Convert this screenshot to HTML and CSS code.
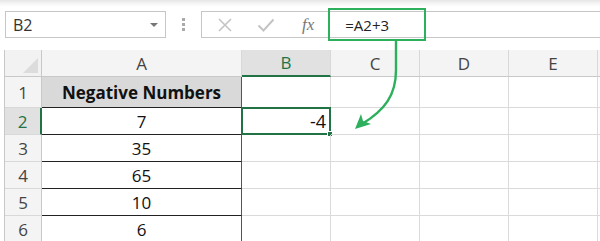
FILE: index.html
```html
<!DOCTYPE html>
<html>
<head>
<meta charset="utf-8">
<link rel="stylesheet" href="styles.css">
</head>
<body>
<div class="page">
  <div class="topbar">
    <div class="namebox"><span class="name">B2</span><span class="caret"></span></div>
    <div class="dots"><i></i><i></i><i></i></div>
    <div class="fbar">
      <svg class="ic ic-x" width="16" height="16" viewBox="0 0 16 16"><path d="M2 2L14 14M14 2L2 14" stroke="#c4c4c4" stroke-width="1.6" fill="none"/></svg>
      <svg class="ic ic-ok" width="18" height="16" viewBox="0 0 18 16"><path d="M1.5 8.5L6.5 13.5L16.5 2.5" stroke="#c4c4c4" stroke-width="2" fill="none"/></svg>
      <span class="fx">fx</span>
      <div class="formula">=A2+3</div>
    </div>
  </div>
  <div class="sheet">
    <div class="corner"><span class="tri"></span></div>
    <div class="ch">A</div>
    <div class="ch sel">B</div>
    <div class="ch">C</div>
    <div class="ch">D</div>
    <div class="ch">E</div>
    <div class="ch last"></div>

    <div class="rh r1">1</div>
    <div class="c a head r1">Negative Numbers</div>
    <div class="c r1 bcol"></div><div class="c r1"></div><div class="c r1"></div><div class="c r1"></div><div class="c r1 last"></div>

    <div class="rh sel">2</div>
    <div class="c a">7</div>
    <div class="c bcol active">-4<span class="handle"></span></div><div class="c"></div><div class="c"></div><div class="c"></div><div class="c last"></div>

    <div class="rh">3</div>
    <div class="c a">35</div>
    <div class="c bcol"></div><div class="c"></div><div class="c"></div><div class="c"></div><div class="c last"></div>

    <div class="rh">4</div>
    <div class="c a">65</div>
    <div class="c bcol"></div><div class="c"></div><div class="c"></div><div class="c"></div><div class="c last"></div>

    <div class="rh">5</div>
    <div class="c a">10</div>
    <div class="c bcol"></div><div class="c"></div><div class="c"></div><div class="c"></div><div class="c last"></div>

    <div class="rh">6</div>
    <div class="c a">6</div>
    <div class="c bcol"></div><div class="c"></div><div class="c"></div><div class="c"></div><div class="c last"></div>
  </div>
  <svg class="arrow" width="600" height="241" viewBox="0 0 600 241">
    <path d="M396 40 L396 70 C396 95 385 110 362 124" stroke="#2cb05c" stroke-width="2.4" fill="none"/>
    <path d="M355 129 L361 114 L363 121 L371 124 Z" fill="#2cb05c"/>
  </svg>
</div>
</body>
</html>
```
FILE: styles.css
```css
* { box-sizing: border-box; }
html, body { margin: 0; padding: 0; background: #fff; }
body { font-family: "Open Sans", sans-serif; }
.page { position: relative; width: 600px; height: 241px; overflow: hidden; }

.topbar {
  height: 50px;
  display: flex;
  align-items: flex-start;
  padding-top: 11px;
  background: linear-gradient(#e6e6e6 0px, #f7f7f7 4px, #ffffff 7px);
}
.namebox {
  margin-left: 5px;
  width: 161px;
  height: 27px;
  border: 1px solid #c6c6c6;
  display: flex;
  align-items: center;
  justify-content: space-between;
  padding: 0 7px 0 7px;
  background: #fff;
}
.name { font-size: 16px; color: #333; }
.caret {
  width: 0; height: 0;
  border-left: 4px solid transparent;
  border-right: 4px solid transparent;
  border-top: 4px solid #777;
}
.dots {
  width: 35px;
  height: 27px;
  display: flex;
  flex-direction: column;
  align-items: center;
  justify-content: center;
  gap: 2px;
}
.dots i { display: block; width: 3px; height: 3px; background: #aaa; }
.fbar {
  flex: 1;
  height: 27px;
  border: 1px solid #c6c6c6;
  border-right: none;
  display: flex;
  align-items: center;
  background: #fff;
}
.ic { display: block; }
.ic-x { margin-left: 15px; }
.ic-ok { margin-left: 24px; }
.fx {
  margin-left: 27px;
  font-family: "Liberation Serif", serif;
  font-style: italic;
  font-size: 17px;
  color: #777;
}
.formula {
  margin-left: 14px;
  margin-top: -4px;
  margin-bottom: -4px;
  height: 33px;
  width: 98px;
  border: 2px solid #2cb05c;
  font-size: 15px;
  color: #222;
  display: flex;
  align-items: center;
  padding-left: 15px;
}

.sheet {
  margin-left: 4px;
  border-left: 1px solid #c8c8c8;
  display: grid;
  grid-template-columns: 37px 200px 89px 89px 89px 89px 1fr;
  grid-template-rows: 27px 31px 27px 27px 27px 27px 27px;
}
.corner {
  background: #f2f2f2;
  border-right: 1px solid #c8c8c8;
  border-bottom: 1px solid #c8c8c8;
  position: relative;
}
.tri {
  position: absolute;
  right: 3px;
  bottom: 3px;
  width: 0; height: 0;
  border-left: 15px solid transparent;
  border-bottom: 15px solid #dcdcdc;
}
.ch {
  background: #f4f4f4;
  border-right: 1px solid #d8d8d8;
  border-bottom: 1px solid #c8c8c8;
  display: flex;
  align-items: center;
  justify-content: center;
  font-size: 17px;
  color: #444;
}
.ch.sel {
  background: #e1e1e1;
  color: #217346;
  border-bottom: 2px solid #217346;
}
.ch.last { border-right: none; }
.rh {
  background: #f4f4f4;
  border-right: 1px solid #c8c8c8;
  border-bottom: 1px solid #d8d8d8;
  display: flex;
  align-items: center;
  justify-content: center;
  font-size: 17px;
  color: #444;
}
.rh.sel {
  background: #e1e1e1;
  color: #217346;
  border-right: 2px solid #217346;
}
.c {
  border-right: 1px solid #dadada;
  border-bottom: 1px solid #dadada;
  display: flex;
  align-items: center;
  font-size: 17px;
  color: #111;
  position: relative;
}
.c.last { border-right: none; }
.c.a {
  justify-content: center;
  border-right: 1px solid #555;
  border-bottom: 1px solid #222;
}
.c.head {
  background: #d9d9d9;
  font-weight: 700;
  font-size: 17px;
}
.c.active {
  border: 2px solid #217346;
  margin: -1px 0 0 -1px;
  justify-content: flex-end;
  padding-right: 3px;
  font-size: 18px;
}
.handle {
  position: absolute;
  right: -4px;
  bottom: -4px;
  width: 6px;
  height: 6px;
  background: #217346;
  border: 1px solid #fff;
}
.arrow { position: absolute; left: 0; top: 0; pointer-events: none; }
```
